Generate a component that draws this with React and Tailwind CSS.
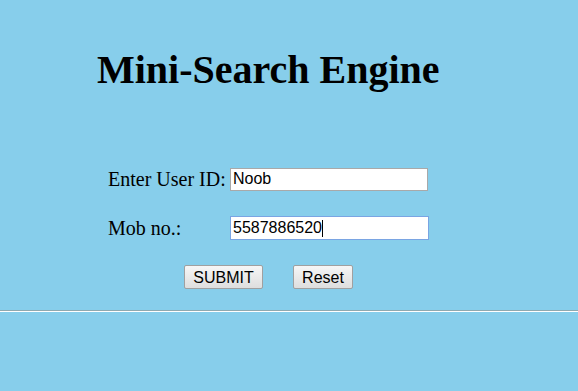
import React from 'react';

const App = () => {
  return (
    <div className="min-h-[391px] bg-[#87ceeb] font-['Liberation_Serif',serif] text-black">
      <div className="pl-[97px] pt-[47px]">
        <h1 className="text-[40px] font-bold leading-[46px]">Mini-Search Engine</h1>
      </div>

      <form className="pl-[108px] pt-[74px]">
        <div className="flex items-center h-[24px]">
          <label className="w-[122px] text-[20px]">Enter User ID:</label>
          <input
            type="text"
            defaultValue="Noob"
            className="w-[198px] h-[23px] bg-white border border-[#a9a9a9] px-[2px] text-[16px] font-['Liberation_Sans',sans-serif] outline-none"
          />
        </div>
        <div className="flex items-center h-[24px] mt-[25px]">
          <label className="w-[122px] text-[20px]">Mob no.:</label>
          <div className="relative">
            <input
              type="text"
              defaultValue="5587886520"
              className="w-[199px] h-[24px] bg-white border border-[#7aa5e3] px-[2px] text-[16px] font-['Liberation_Sans',sans-serif] outline-none"
            />
            <span className="absolute left-[92px] top-[4px] w-px h-[17px] bg-black" />
          </div>
        </div>
        <div className="flex mt-[25px] pl-[76px] gap-[30px]">
          <button
            type="button"
            className="w-[79px] h-[24px] bg-gradient-to-b from-[#f6f6f6] to-[#dedede] border border-[#a0a0a0] rounded-[2px] text-[16px] font-['Liberation_Sans',sans-serif]"
          >
            SUBMIT
          </button>
          <button
            type="reset"
            className="w-[60px] h-[24px] bg-gradient-to-b from-[#f6f6f6] to-[#dedede] border border-[#a0a0a0] rounded-[2px] text-[16px] font-['Liberation_Sans',sans-serif]"
          >
            Reset
          </button>
        </div>
      </form>

      <hr className="mt-[21px] border-t border-t-[#8fa9b0] border-b border-b-white" />
    </div>
  );
};

export default App;
